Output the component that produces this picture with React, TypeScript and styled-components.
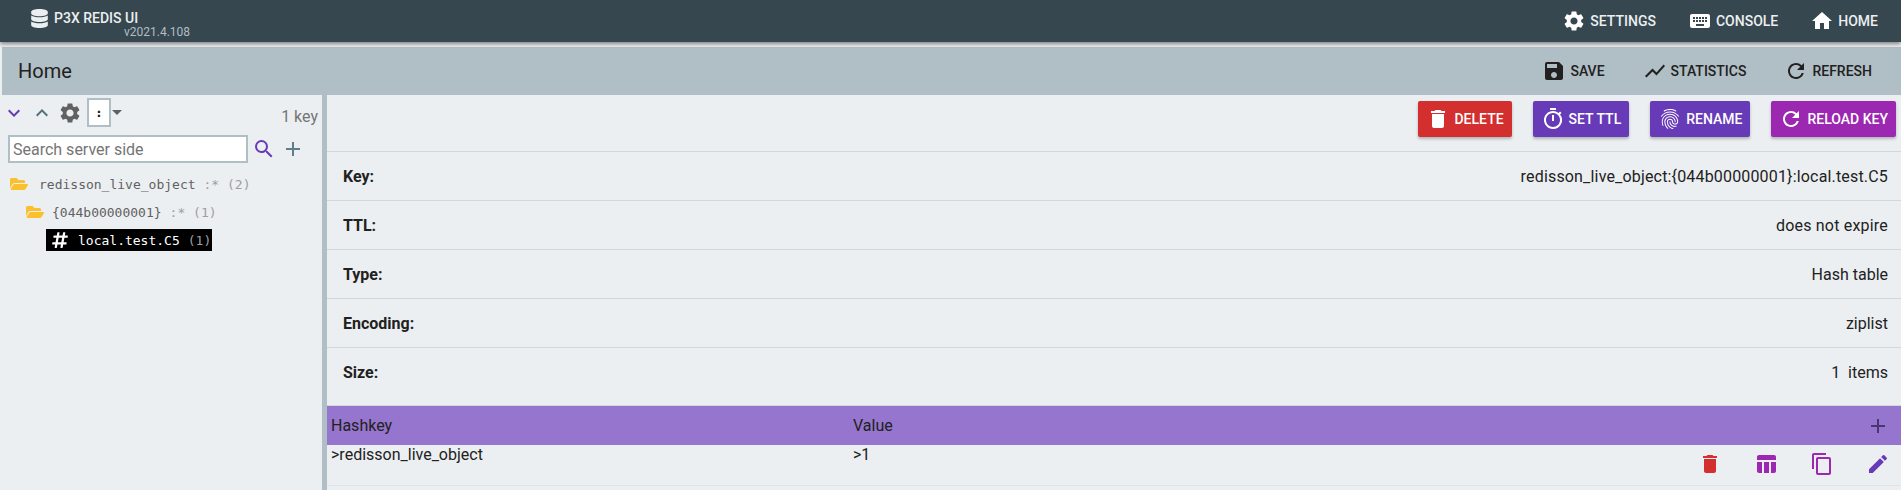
import { ReactNode } from "react";
import styled, { createGlobalStyle } from "styled-components";
import { FaDatabase, FaFolderOpen, FaHashtag } from "react-icons/fa";
import {
  MdAdd,
  MdArrowDropDown,
  MdContentCopy,
  MdDelete,
  MdEdit,
  MdFingerprint,
  MdHome,
  MdKeyboard,
  MdKeyboardArrowDown,
  MdKeyboardArrowUp,
  MdOutlineTimer,
  MdRefresh,
  MdSave,
  MdSearch,
  MdSettings,
  MdShowChart,
  MdTableChart,
} from "react-icons/md";

const GlobalStyle = createGlobalStyle`
  html, body {
    margin: 0;
    padding: 0;
    height: 490px;
    overflow: hidden;
    background: #eceff1;
    font-family: Roboto, "Liberation Sans", sans-serif;
  }
  * { box-sizing: border-box; }
`;

const Page = styled.div`
  width: 1901px;
  height: 490px;
  display: flex;
  flex-direction: column;
  background: #eceff1;
  color: #212121;
`;

const TopBar = styled.header`
  height: 42px;
  flex: none;
  display: flex;
  align-items: center;
  justify-content: space-between;
  padding: 0 23px 0 30px;
  background: #37474f;
  color: #fff;
  box-shadow: 0 2px 4px rgba(0, 0, 0, 0.45);
  position: relative;
  z-index: 2;
`;

const Brand = styled.div`
  position: relative;
  display: flex;
  align-items: center;
  gap: 5px;
  height: 36px;
  margin-top: -6px;
  font-size: 14px;
  font-weight: 500;
  color: #eceff1;
  svg {
    width: 19px;
    height: 19px;
  }
`;

const Version = styled.span`
  position: absolute;
  left: 94px;
  top: 25px;
  font-size: 12px;
  font-weight: 400;
  color: #b0bec5;
  white-space: nowrap;
`;

const Nav = styled.nav`
  display: flex;
  align-items: center;
  gap: 32px;
`;

const NavItem = styled.a<{ $dark?: boolean }>`
  display: flex;
  align-items: center;
  gap: 4px;
  font-size: 14px;
  font-weight: 500;
  color: ${(p) => (p.$dark ? "#212121" : "#eceff1")};
  svg {
    width: 24px;
    height: 24px;
    color: ${(p) => (p.$dark ? "#212121" : "#fff")};
  }
`;

const Shell = styled.div`
  flex: 1;
  min-height: 0;
  display: flex;
  flex-direction: column;
  margin-top: 5px;
`;

const TitleBar = styled.div`
  height: 48px;
  flex: none;
  display: flex;
  align-items: center;
  justify-content: space-between;
  margin-left: 2px;
  padding: 0 29px 0 16px;
  background: #b0bec5;
`;

const Title = styled.h1`
  margin: 0;
  font-size: 20px;
  font-weight: 400;
  color: #212121;
`;

const Actions = styled.div`
  display: flex;
  align-items: center;
  gap: 38px;
`;

const Split = styled.div`
  flex: 1;
  min-height: 0;
  display: flex;
`;

const Sidebar = styled.aside`
  width: 327px;
  flex: none;
  background: #eceff1;
  border-right: 5px solid #b0bec5;
  padding: 3px 4px 0 2px;
`;

const TreeTools = styled.div`
  display: flex;
  align-items: flex-start;
  height: 32px;
`;

const ToolIcon = styled.span<{ $color: string }>`
  display: inline-flex;
  color: ${(p) => p.$color};
  svg {
    width: 24px;
    height: 24px;
  }
`;

const DownArrow = styled(ToolIcon)`
  margin-top: 3px;
`;

const UpArrow = styled(ToolIcon)`
  margin-left: 4px;
  margin-top: 3px;
`;

const Gear = styled(ToolIcon)`
  margin-left: 4px;
  margin-top: 3px;
`;

const Divider = styled.span`
  width: 24px;
  height: 29px;
  margin-left: 5px;
  border: 2px solid #b0bec5;
  background: #fff;
  font-family: "DejaVu Sans Mono", monospace;
  font-size: 13px;
  font-weight: 700;
  display: flex;
  align-items: center;
  justify-content: center;
`;

const Caret = styled(ToolIcon)`
  margin-left: -6px;
  margin-top: 2px;
`;

const KeyCount = styled.span`
  margin-left: auto;
  margin-top: 9px;
  font-size: 16px;
  color: #757575;
`;

const SearchRow = styled.div`
  display: flex;
  align-items: center;
  margin-top: 5px;
  margin-left: 6px;
`;

const SearchBox = styled.div`
  width: 240px;
  height: 28px;
  border: 2px solid #b0bec5;
  background: #fff;
  padding-left: 3px;
  display: flex;
  align-items: center;
  font-size: 16px;
  color: #757575;
`;

const SearchIcon = styled(ToolIcon)`
  margin-left: 4px;
`;

const PlusIcon = styled(ToolIcon)`
  margin-left: 5px;
`;

const Tree = styled.div`
  margin-top: 10px;
  font-family: "DejaVu Sans Mono", monospace;
  font-size: 13px;
  display: flex;
  flex-direction: column;
  gap: 6px;
`;

const TreeRow = styled.div<{ $depth: number; $gap: number }>`
  display: flex;
  align-items: center;
  height: 22px;
  gap: ${(p) => p.$gap}px;
  padding-left: ${(p) => p.$depth}px;
  color: #616161;
  svg {
    width: 18px;
    height: 16px;
    color: #fbc02d;
    flex: none;
  }
`;

const Muted = styled.span`
  color: #9e9e9e;
  margin-left: 8px;
`;

const Selected = styled.div`
  display: inline-flex;
  align-items: center;
  height: 22px;
  margin-left: 44px;
  padding: 0 1px 0 6px;
  gap: 10px;
  align-self: flex-start;
  background: #000;
  color: #fff;
  svg {
    width: 16px;
    height: 18px;
  }
`;

const Main = styled.main`
  flex: 1;
  min-width: 0;
  background: #eceff1;
  display: flex;
  flex-direction: column;
`;

const ButtonBar = styled.div`
  height: 57px;
  flex: none;
  display: flex;
  align-items: flex-start;
  justify-content: flex-end;
  gap: 21px;
  padding: 6px 5px 0 0;
  border-bottom: 1px solid #cfd8dc;
`;

const Button = styled.button<{ $bg: string }>`
  height: 36px;
  padding: 0 8px;
  display: flex;
  align-items: center;
  gap: 4px;
  border: 0;
  border-radius: 2px;
  background: ${(p) => p.$bg};
  color: #fff;
  font-family: inherit;
  font-size: 14px;
  font-weight: 500;
  box-shadow: 0 2px 3px rgba(0, 0, 0, 0.25);
  svg {
    width: 24px;
    height: 24px;
  }
`;

const InfoRow = styled.div`
  height: 49px;
  flex: none;
  display: flex;
  align-items: center;
  justify-content: space-between;
  padding: 0 13px 0 16px;
  border-bottom: 1px solid #cfd8dc;
  font-size: 16px;
  b {
    font-weight: 700;
  }
`;

const InfoValue = styled.span<{ $tracking: number }>`
  letter-spacing: ${(p) => p.$tracking}px;
`;

const LastInfoRow = styled(InfoRow)`
  border-bottom: 0;
  margin-bottom: 8px;
`;

const TableHead = styled.div`
  height: 40px;
  flex: none;
  display: grid;
  grid-template-columns: 522px 1fr auto;
  align-items: center;
  padding: 0 11px 0 4px;
  background: #9575cd;
  border-top: 1px solid #cfd8dc;
  font-size: 16px;
  color: #212121;
  svg {
    width: 24px;
    height: 24px;
    color: #4a3670;
    display: block;
  }
`;

const TableRow = styled.div`
  height: 41px;
  flex: none;
  display: grid;
  grid-template-columns: 522px 1fr auto;
  padding: 0 11px 0 4px;
  border-bottom: 1px solid #dde3e6;
  font-size: 16px;
  line-height: 20px;
`;

const RowActions = styled.div`
  display: flex;
  gap: 32px;
  padding-top: 7px;
`;

const RowIcon = styled.span<{ $color: string }>`
  display: inline-flex;
  color: ${(p) => p.$color};
  svg {
    width: 24px;
    height: 24px;
  }
`;

function TitleAction({ icon, label }: { icon: ReactNode; label: string }) {
  return (
    <NavItem $dark>
      {icon}
      {label}
    </NavItem>
  );
}

const infoRows: [string, string, number][] = [
  ["Key:", "redisson_live_object:{044b00000001}:local.test.C5", 0.17],
  ["TTL:", "does not expire", 0.2],
  ["Type:", "Hash table", 0],
  ["Encoding:", "ziplist", 0],
];

export default function App() {
  return (
    <Page>
      <GlobalStyle />
      <TopBar>
        <Brand>
          <FaDatabase />
          P3X REDIS UI
          <Version>v2021.4.108</Version>
        </Brand>
        <Nav>
          <NavItem>
            <MdSettings />
            SETTINGS
          </NavItem>
          <NavItem>
            <MdKeyboard />
            CONSOLE
          </NavItem>
          <NavItem>
            <MdHome />
            HOME
          </NavItem>
        </Nav>
      </TopBar>
      <Shell>
        <TitleBar>
          <Title>Home</Title>
          <Actions>
            <TitleAction icon={<MdSave />} label="SAVE" />
            <TitleAction icon={<MdShowChart />} label="STATISTICS" />
            <TitleAction icon={<MdRefresh />} label="REFRESH" />
          </Actions>
        </TitleBar>
        <Split>
          <Sidebar>
            <TreeTools>
              <DownArrow $color="#673ab7">
                <MdKeyboardArrowDown />
              </DownArrow>
              <UpArrow $color="#546e7a">
                <MdKeyboardArrowUp />
              </UpArrow>
              <Gear $color="#616161">
                <MdSettings />
              </Gear>
              <Divider>:</Divider>
              <Caret $color="#616161">
                <MdArrowDropDown />
              </Caret>
              <KeyCount>1 key</KeyCount>
            </TreeTools>
            <SearchRow>
              <SearchBox>Search server side</SearchBox>
              <SearchIcon $color="#673ab7">
                <MdSearch />
              </SearchIcon>
              <PlusIcon $color="#607d8b">
                <MdAdd />
              </PlusIcon>
            </SearchRow>
            <Tree>
              <TreeRow $depth={8} $gap={11}>
                <FaFolderOpen />
                <span>
                  redisson_live_object<Muted>:* (2)</Muted>
                </span>
              </TreeRow>
              <TreeRow $depth={24} $gap={8}>
                <FaFolderOpen />
                <span>
                  {"{044b00000001}"}
                  <Muted>:* (1)</Muted>
                </span>
              </TreeRow>
              <Selected>
                <FaHashtag />
                <span>
                  local.test.C5<Muted>(1)</Muted>
                </span>
              </Selected>
            </Tree>
          </Sidebar>
          <Main>
            <ButtonBar>
              <Button $bg="#d32f2f">
                <MdDelete />
                DELETE
              </Button>
              <Button $bg="#673ab7">
                <MdOutlineTimer />
                SET TTL
              </Button>
              <Button $bg="#673ab7">
                <MdFingerprint />
                RENAME
              </Button>
              <Button $bg="#9c27b0">
                <MdRefresh />
                RELOAD KEY
              </Button>
            </ButtonBar>
            {infoRows.map(([label, value, tracking]) => (
              <InfoRow key={label}>
                <b>{label}</b>
                <InfoValue $tracking={tracking}>{value}</InfoValue>
              </InfoRow>
            ))}
            <LastInfoRow>
              <b>Size:</b>
              <span>1&nbsp; items</span>
            </LastInfoRow>
            <TableHead>
              <span>Hashkey</span>
              <span>Value</span>
              <MdAdd />
            </TableHead>
            <TableRow>
              <span>&gt;redisson_live_object</span>
              <span>&gt;1</span>
              <RowActions>
                <RowIcon $color="#d32f2f">
                  <MdDelete />
                </RowIcon>
                <RowIcon $color="#9c27b0">
                  <MdTableChart />
                </RowIcon>
                <RowIcon $color="#9c27b0">
                  <MdContentCopy />
                </RowIcon>
                <RowIcon $color="#673ab7">
                  <MdEdit />
                </RowIcon>
              </RowActions>
            </TableRow>
          </Main>
        </Split>
      </Shell>
    </Page>
  );
}
